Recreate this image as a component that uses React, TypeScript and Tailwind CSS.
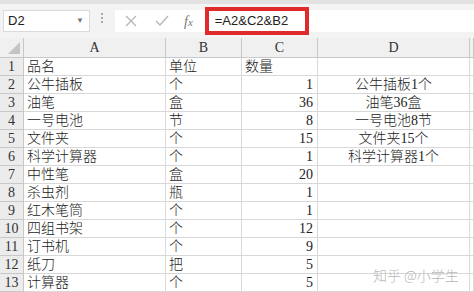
const rows: [string, string, string, string][] = [
  ['品名', '单位', '数量', ''],
  ['公牛插板', '个', '1', '公牛插板1个'],
  ['油笔', '盒', '36', '油笔36盒'],
  ['一号电池', '节', '8', '一号电池8节'],
  ['文件夹', '个', '15', '文件夹15个'],
  ['科学计算器', '个', '1', '科学计算器1个'],
  ['中性笔', '盒', '20', ''],
  ['杀虫剂', '瓶', '1', ''],
  ['红木笔筒', '个', '1', ''],
  ['四组书架', '个', '12', ''],
  ['订书机', '个', '9', ''],
  ['纸刀', '把', '5', ''],
  ['计算器', '个', '5', ''],
]

const cell = 'border-r border-b border-[#d8d8d8] overflow-hidden whitespace-nowrap'
const head = 'border-r border-b border-[#c8c8c8] bg-[#f0f0f0] flex items-center justify-center text-[14px] text-[#333]'

export default function App() {
  return (
    <div
      className="relative h-[292px] w-[474px] overflow-hidden bg-white text-[#222] font-light"
      style={{ fontFamily: '"Liberation Serif", "Noto Sans CJK SC", serif' }}
    >
      {/* formula bar */}
      <div className="h-[38px] border-t-[4px] border-[#e2e2e2] bg-[#f3f3f3] flex items-start pt-[6px] font-normal font-['Liberation_Sans',sans-serif]">
        <div className="ml-[3px] h-[22px] w-[87px] border border-[#dadada] bg-white flex items-center justify-between pl-[4px] pr-[5px] text-[13px]">
          <span>D2</span>
          <span className="text-[8px] text-[#777]">▼</span>
        </div>
        <div className="ml-[11px] mt-[3px] flex flex-col gap-[2px]">
          <span className="block h-[2px] w-[2px] bg-[#aaa]" />
          <span className="block h-[2px] w-[2px] bg-[#aaa]" />
          <span className="block h-[2px] w-[2px] bg-[#aaa]" />
        </div>
        <div className="ml-[12px] flex h-[22px] flex-1 items-center bg-white">
          <svg width="12" height="12" viewBox="0 0 12 12" className="ml-[10px]">
            <path d="M1 1 L11 11 M11 1 L1 11" stroke="#b5b5b5" strokeWidth="1.3" />
          </svg>
          <svg width="14" height="12" viewBox="0 0 14 12" className="ml-[18px]">
            <path d="M1 6 L5 10 L13 1" stroke="#b5b5b5" strokeWidth="1.3" fill="none" />
          </svg>
          <span className="ml-[15px] text-[14px] italic text-[#777] font-['Liberation_Serif',serif]">
            f<span className="text-[11px]">x</span>
          </span>
          <div className="ml-[12px] -mt-[1px] flex h-[28px] w-[104px] items-center border-[4px] border-[#e02b2b] pl-[6px] text-[13px] text-[#222]">
            =A2&amp;C2&amp;B2
          </div>
        </div>
      </div>

      {/* sheet */}
      <div className="grid grid-cols-[24px_142px_76px_76px_152px_1fr] grid-rows-[20px_repeat(13,18px)]">
        <div className={`${head} relative`}>
          <svg width="12" height="12" viewBox="0 0 12 12" className="absolute right-[3px] bottom-[3px]">
            <path d="M12 0 L12 12 L0 12 Z" fill="#c4c4c4" />
          </svg>
        </div>
        <div className={head}>A</div>
        <div className={head}>B</div>
        <div className={head}>C</div>
        <div className={head}>D</div>
        <div className={head} />
        {rows.map((r, i) => (
          <div key={i} className="contents">
            <div className="border-r border-b border-[#c8c8c8] bg-[#ececec] flex items-center justify-center text-[14px] text-[#333]">
              {i + 1}
            </div>
            <div className={`${cell} pl-[3px] text-[14px] leading-[18px]`}>{r[0]}</div>
            <div className={`${cell} pl-[3px] text-[14px] leading-[18px]`}>{r[1]}</div>
            <div className={`${cell} ${i === 0 ? 'pl-[3px] text-left' : 'pr-[4px] text-right'} text-[14px] leading-[18px]`}>{r[2]}</div>
            <div className={`${cell} text-center text-[14px] leading-[18px]`}>{r[3]}</div>
            <div className={cell} />
          </div>
        ))}
      </div>

      {/* watermark */}
      <div className="absolute left-[373px] top-[265px] text-[14px] text-[#b8b8b8] font-['Noto_Sans_CJK_SC',sans-serif]">
        知乎 @小学生
      </div>
    </div>
  )
}
